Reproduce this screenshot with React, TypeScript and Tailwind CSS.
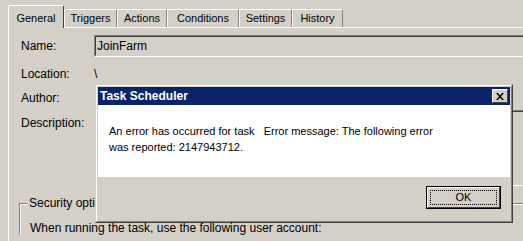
const tabs = [
  { label: "Triggers", cls: "w-[53px]" },
  { label: "Actions", cls: "w-[50px]" },
  { label: "Conditions", cls: "w-[72px]" },
  { label: "Settings", cls: "w-[53px]" },
  { label: "History", cls: "w-[51px]" },
];

const Sunken = ({ className, children }: { className: string; children?: React.ReactNode }) => (
  <div className={`border border-t-[#808080] border-l-[#808080] border-b-white border-r-white ${className}`}>
    <div className="h-full border border-t-[#404040] border-l-[#404040] border-b-[#d4d0c8] border-r-[#d4d0c8]">
      {children}
    </div>
  </div>
);

const ErrorDialog = () => {
  return (
    <div className="absolute left-[95px] top-[84px] w-[418px] h-[139px] text-[11px] border border-t-[#d4d0c8] border-l-[#d4d0c8] border-r-[#404040] border-b-[#404040]">
      <div className="h-full flex flex-col p-px border border-t-white border-l-white border-r-[#808080] border-b-[#808080] bg-[#d4d0c8]">
        <div className="h-[18px] flex items-center justify-between bg-[#0a246a] pl-[2px] pr-[2px]">
          <span className="font-bold text-[12px] text-white">Task Scheduler</span>
          <button className="w-[16px] h-[14px] flex items-center justify-center bg-[#d4d0c8] border border-t-white border-l-white border-r-[#404040] border-b-[#404040]">
            <svg width="8" height="7" viewBox="0 0 8 7">
              <path d="M0 0h2l2 2.5L6 0h2L5 3.5 8 7H6L4 4.5 2 7H0l3-3.5z" fill="#000" />
            </svg>
          </button>
        </div>
        <div className="h-[72px] bg-white pl-[11px] pt-[18px] leading-[16px] text-black">
          <p className="whitespace-pre">An error has occurred for task   Error message: The following error</p>
          <p>was reported: 2147943712.</p>
        </div>
        <div className="flex-1 flex justify-end pt-[9px] pr-[9px]">
          <button className="w-[75px] h-[23px] border border-black">
            <div className="h-full border border-t-white border-l-white border-r-[#404040] border-b-[#404040] p-[2px]">
              <div className="h-full flex items-center justify-center border border-dotted border-black">OK</div>
            </div>
          </button>
        </div>
      </div>
    </div>
  );
};

const App = () => {
  return (
    <div className="relative w-[523px] h-[241px] overflow-hidden bg-[#d4d0c8] text-[12px] text-black font-['Liberation_Sans',Arial,sans-serif]">
      <div className="flex items-end h-[27px] pl-[8px] text-[11px]">
        <div className="relative z-10 -mb-px w-[56px] h-[23px] flex justify-center pt-[4px] bg-[#d4d0c8] border-t border-l border-white border-r border-r-[#404040] rounded-t-[2px]">
          General
        </div>
        {tabs.map((t) => (
          <div
            key={t.label}
            className={`${t.cls} h-[18px] flex items-center justify-center border-t border-l border-white border-r border-r-[#808080] rounded-t-[2px]`}
          >
            {t.label}
          </div>
        ))}
      </div>

      <div className="ml-[8px] w-[600px] h-[300px] border-t border-l border-white">
        <div className="pl-[12px] pt-[7px] flex flex-col">
          <div className="flex items-center h-[22px]">
            <span className="w-[73px]">Name:</span>
            <Sunken className="flex-1 h-[22px]">
              <div className="h-full flex items-center pl-[1px]">JoinFarm</div>
            </Sunken>
          </div>
          <div className="flex items-center h-[13px] mt-[10px]">
            <span className="w-[73px]">Location:</span>
            <span>\</span>
          </div>
          <div className="flex items-center h-[13px] mt-[11px]">
            <span className="w-[73px]">Author:</span>
          </div>
          <div className="flex mt-[6px]">
            <span className="w-[74px] pt-[4px]">Description:</span>
            <Sunken className="flex-1 h-[76px]" />
          </div>
        </div>

        <fieldset className="ml-[10px] mt-[10px] border-t border-l border-[#808080] shadow-[inset_1px_1px_0_white]">
          <legend className="ml-[8px] px-[1px] leading-[14px] bg-[#d4d0c8]">Security options</legend>
          <p className="pl-[10px] mt-[11px] leading-[14px]">When running the task, use the following user account:</p>
        </fieldset>
      </div>

      <ErrorDialog />
    </div>
  );
};

export default App;
